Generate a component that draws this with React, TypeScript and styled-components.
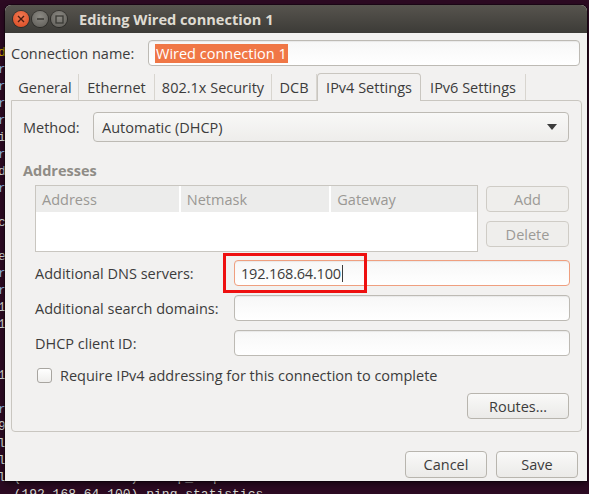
import styled, { createGlobalStyle } from 'styled-components';

const GlobalStyle = createGlobalStyle`
  html, body {
    margin: 0;
    padding: 0;
    background: #2c0a22;
  }
`;

const UI_FONT = `'Open Sans', 'Noto Sans', 'DejaVu Sans', sans-serif`;

const terminalLines: { text: string; color: string }[] = [
  { text: '', color: '#d3d7cf' },
  { text: 'd', color: '#c4a000' },
  { text: 'r', color: '#8fb6e0' },
  { text: 'r', color: '#8fb6e0' },
  { text: 'r', color: '#8fb6e0' },
  { text: 'r', color: '#8fb6e0' },
  { text: 'i', color: '#d3d7cf' },
  { text: 'r', color: '#8fb6e0' },
  { text: 'd', color: '#d3d7cf' },
  { text: 'r', color: '#8fb6e0' },
  { text: '', color: '#d3d7cf' },
  { text: 'c', color: '#d3d7cf' },
  { text: '', color: '#d3d7cf' },
  { text: 'e', color: '#d3d7cf' },
  { text: 'r', color: '#8fb6e0' },
  { text: 'r', color: '#8fb6e0' },
  { text: '1', color: '#d3d7cf' },
  { text: '1', color: '#d3d7cf' },
  { text: '', color: '#d3d7cf' },
  { text: '', color: '#d3d7cf' },
  { text: '1', color: '#d3d7cf' },
  { text: '', color: '#d3d7cf' },
  { text: 'r', color: '#8fb6e0' },
  { text: '9', color: '#d3d7cf' },
  { text: 'l', color: '#d3d7cf' },
  { text: 'l', color: '#d3d7cf' },
  { text: 'l (192.168.64.100): icmp_seq=5 ttl=64 time=0.045 ms', color: '#d3d7cf' },
  { text: '- (192.168.64.100) ping statistics ---', color: '#d3d7cf' },
];

export default function App() {
  return (
    <>
      <GlobalStyle />
      <Desktop>
        <Terminal>
          {terminalLines.map((line, i) => (
            <TermLine key={i} color={line.color}>
              {line.text || ' '}
            </TermLine>
          ))}
        </Terminal>

        <Window>
          <TitleBar>
            <WinButtons>
              <WinButton kind="close">
                <svg width="8" height="8" viewBox="0 0 8 8">
                  <path d="M1 1 L7 7 M7 1 L1 7" stroke="#4a1c10" strokeWidth="1.4" />
                </svg>
              </WinButton>
              <WinButton kind="plain">
                <svg width="9" height="8" viewBox="0 0 9 8">
                  <path d="M1 4 H8" stroke="#3a3935" strokeWidth="1.4" />
                </svg>
              </WinButton>
              <WinButton kind="plain">
                <svg width="9" height="9" viewBox="0 0 9 9">
                  <rect x="1" y="1" width="7" height="7" fill="none" stroke="#3a3935" strokeWidth="1.3" />
                </svg>
              </WinButton>
            </WinButtons>
            <Title>Editing Wired connection 1</Title>
          </TitleBar>

          <Body>
            <NameRow>
              <Label>Connection name:</Label>
              <Entry width={432}>
                <Selected>Wired connection 1</Selected>
              </Entry>
            </NameRow>

            <Tabs>
              <Tab width={67}>General</Tab>
              <Tab width={76}>Ethernet</Tab>
              <Tab width={117}>802.1x Security</Tab>
              <Tab width={45}>DCB</Tab>
              <Tab width={104} active>
                IPv4 Settings
              </Tab>
              <Tab width={105}>IPv6 Settings</Tab>
            </Tabs>

            <Panel>
              <MethodRow>
                <Label>Method:</Label>
                <Combo>
                  <span>Automatic (DHCP)</span>
                  <svg width="10" height="6" viewBox="0 0 10 6">
                    <path d="M0 0 H10 L5 6 Z" fill="#3c3c3c" />
                  </svg>
                </Combo>
              </MethodRow>

              <SectionTitle>Addresses</SectionTitle>

              <AddressArea>
                <AddressTable>
                  <HeaderRow>
                    <HeaderCell width={144}>Address</HeaderCell>
                    <HeaderCell width={150}>Netmask</HeaderCell>
                    <HeaderCell width={147} last>
                      Gateway
                    </HeaderCell>
                  </HeaderRow>
                </AddressTable>
                <SideButtons>
                  <Button width={83} disabled>
                    Add
                  </Button>
                  <Button width={83} disabled>
                    Delete
                  </Button>
                </SideButtons>
              </AddressArea>

              <FormGrid>
                <Label>Additional DNS servers:</Label>
                <Marked>
                  <Entry width={336} focused>
                    <EntryText>192.168.64.100</EntryText>
                    <Caret />
                  </Entry>
                  <RedBox />
                </Marked>

                <Label>Additional search domains:</Label>
                <Entry width={336} />

                <Label>DHCP client ID:</Label>
                <Entry width={336} />
              </FormGrid>

              <CheckRow>
                <CheckBox />
                <Label>Require IPv4 addressing for this connection to complete</Label>
              </CheckRow>

              <RoutesRow>
                <Button width={102}>Routes…</Button>
              </RoutesRow>
            </Panel>

            <DialogActions>
              <Button width={82} height={27}>
                Cancel
              </Button>
              <Button width={82} height={27}>
                Save
              </Button>
            </DialogActions>
          </Body>
        </Window>
      </Desktop>
    </>
  );
}

const Desktop = styled.div`
  position: relative;
  width: 589px;
  height: 494px;
  overflow: hidden;
  background: #2c0a22;
`;

const Terminal = styled.div`
  position: absolute;
  left: 0;
  top: 27px;
  font-family: 'Liberation Mono', 'DejaVu Sans Mono', monospace;
  font-size: 13px;
  line-height: 17px;
  white-space: pre;
`;

const TermLine = styled.div<{ color: string }>`
  color: ${({ color }) => color};
  margin-left: -2px;
`;

const Window = styled.div`
  position: absolute;
  left: 5px;
  top: 5px;
  width: 582px;
  height: 476px;
  display: flex;
  flex-direction: column;
  background: #f2f1f0;
  border-radius: 6px 6px 0 0;
  overflow: hidden;
  box-shadow: 0 0 0 1px rgba(0, 0, 0, 0.35), 0 3px 6px rgba(0, 0, 0, 0.5);
`;

const TitleBar = styled.div`
  height: 28px;
  flex-shrink: 0;
  display: flex;
  align-items: center;
  padding-left: 8px;
  background: linear-gradient(#57544e, #3c3b37);
`;

const WinButtons = styled.div`
  display: flex;
  gap: 3px;
`;

const WinButton = styled.div<{ kind: 'close' | 'plain' }>`
  width: 16px;
  height: 16px;
  border-radius: 50%;
  display: flex;
  align-items: center;
  justify-content: center;
  background: ${({ kind }) =>
    kind === 'close'
      ? 'radial-gradient(circle at 50% 35%, #f37b54, #d8461e)'
      : 'radial-gradient(circle at 50% 35%, #8c8a84, #5c5a55)'};
  box-shadow: 0 0 0 1px rgba(0, 0, 0, 0.35);
`;

const Title = styled.div`
  margin-left: 12px;
  font-family: ${UI_FONT};
  font-weight: 700;
  font-size: 14.6px;
  color: #dfdbd2;
`;

const Body = styled.div`
  flex: 1;
  display: flex;
  flex-direction: column;
  padding: 7px 7px 0 6px;
  font-family: ${UI_FONT};
  font-size: 14.5px;
  color: #3c3c3c;
`;

const Label = styled.span`
  font-family: ${UI_FONT};
  font-size: 14.5px;
  color: #3c3c3c;
  white-space: nowrap;
`;

const NameRow = styled.div`
  display: flex;
  align-items: center;
  justify-content: space-between;
`;

const Entry = styled.div<{ width: number; focused?: boolean }>`
  box-sizing: border-box;
  width: ${({ width }) => width}px;
  height: 26px;
  display: flex;
  align-items: center;
  padding-left: 6px;
  border-radius: 4px;
  border: 1px solid ${({ focused }) => (focused ? '#ef9f7f' : '#bdbab4')};
  background: linear-gradient(#f7f7f7, #ffffff);
  box-shadow: inset 0 1px 1px rgba(0, 0, 0, 0.06);
`;

const Selected = styled.span`
  background: #f07746;
  color: #ffffff;
  padding: 0 1px;
  line-height: 19px;
`;

const EntryText = styled.span`
  color: #3c3c3c;
  letter-spacing: -0.2px;
`;

const Caret = styled.span`
  width: 1px;
  height: 17px;
  background: #3c3c3c;
  margin-left: 1px;
`;

const Tabs = styled.div`
  display: flex;
  align-items: flex-end;
  height: 26px;
  margin-top: 8px;
  padding-left: 1px;
`;

const Tab = styled.div<{ width: number; active?: boolean }>`
  box-sizing: border-box;
  width: ${({ width }) => width}px;
  height: ${({ active }) => (active ? 28 : 26)}px;
  display: flex;
  align-items: center;
  justify-content: center;
  color: #3c3c3c;
  border-right: 1px solid #d8d5cf;
  ${({ active }) =>
    active
      ? `
    border: 1px solid #c9c6c0;
    border-bottom: none;
    border-radius: 4px 4px 0 0;
    background: #f2f1f0;
    margin-bottom: -1px;
    position: relative;
    z-index: 1;
  `
      : ''}
`;

const Panel = styled.div`
  box-sizing: border-box;
  width: 571px;
  height: 332px;
  display: flex;
  flex-direction: column;
  padding: 11px 12px 0 11px;
  border: 1px solid #c9c6c0;
  border-radius: 0 4px 4px 4px;
`;

const MethodRow = styled.div`
  display: flex;
  align-items: center;
  justify-content: space-between;
`;

const Combo = styled.div`
  box-sizing: border-box;
  width: 476px;
  height: 30px;
  display: flex;
  align-items: center;
  justify-content: space-between;
  padding: 0 11px 0 8px;
  border: 1px solid #bdbab4;
  border-radius: 4px;
  background: linear-gradient(#f8f8f7, #eeedeb);
  color: #3c3c3c;
`;

const SectionTitle = styled.div`
  margin-top: 19px;
  font-weight: 700;
  color: #8f8c86;
  line-height: 20px;
`;

const AddressArea = styled.div`
  display: flex;
  justify-content: space-between;
  margin-top: 4px;
  padding-left: 12px;
`;

const AddressTable = styled.div`
  box-sizing: border-box;
  width: 443px;
  height: 67px;
  border: 1px solid #c9c6c0;
  background: #ffffff;
`;

const HeaderRow = styled.div`
  display: flex;
  height: 26px;
  background: #ececeb;
`;

const HeaderCell = styled.div<{ width: number; last?: boolean }>`
  width: ${({ width }) => width}px;
  display: flex;
  align-items: center;
  padding-left: 6px;
  color: #9a9894;
  border-right: ${({ last }) => (last ? 'none' : '2px solid #ffffff')};
`;

const SideButtons = styled.div`
  display: flex;
  flex-direction: column;
  gap: 9px;
  padding-top: 1px;
`;

const Button = styled.button<{ width: number; height?: number }>`
  box-sizing: border-box;
  width: ${({ width }) => width}px;
  height: ${({ height }) => height ?? 26}px;
  padding: 0;
  font-family: ${UI_FONT};
  font-size: 14.5px;
  color: #3c3c3c;
  border: 1px solid #b8b5ae;
  border-radius: 4px;
  background: linear-gradient(#f9f9f8, #ebeae8);

  &:disabled {
    color: #9c9a96;
    border-color: #cfccc6;
    background: #efeeec;
  }
`;

const FormGrid = styled.div`
  display: grid;
  grid-template-columns: 199px 336px;
  grid-auto-rows: 26px;
  row-gap: 9px;
  align-items: center;
  margin-top: 8px;
  padding-left: 12px;
`;

const Marked = styled.div`
  position: relative;
`;

const RedBox = styled.div`
  position: absolute;
  left: -11px;
  top: -7px;
  width: 144px;
  height: 40px;
  box-sizing: border-box;
  border: 3px solid #ee1010;
  pointer-events: none;
`;

const CheckRow = styled.div`
  display: flex;
  align-items: center;
  gap: 8px;
  margin-top: 10px;
  padding-left: 14px;
  height: 18px;
`;

const CheckBox = styled.div`
  box-sizing: border-box;
  width: 15px;
  height: 15px;
  border: 1px solid #a8a5a0;
  border-radius: 3px;
  background: linear-gradient(#ffffff, #efeeec);
`;

const RoutesRow = styled.div`
  display: flex;
  justify-content: flex-end;
  margin-top: 9px;
`;

const DialogActions = styled.div`
  display: flex;
  justify-content: flex-end;
  gap: 9px;
  margin-top: 19px;
  padding-right: 2px;
`;
